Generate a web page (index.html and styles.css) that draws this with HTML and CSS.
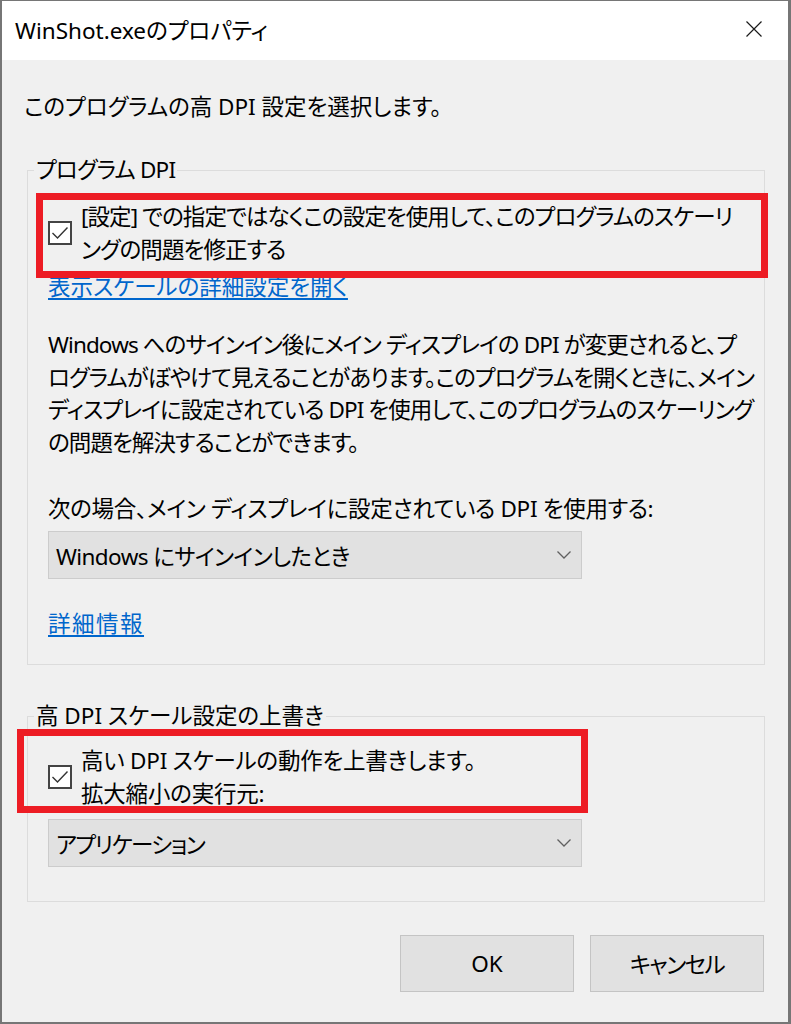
FILE: index.html
```html
<!DOCTYPE html>
<html lang="ja">
<head>
<meta charset="utf-8">
<title>WinShot.exeのプロパティ</title>
<link rel="stylesheet" href="styles.css">
</head>
<body>
<div class="window">
  <header class="titlebar">
    <span class="title">WinShot.exeのプロパティ</span>
    <svg class="close" viewBox="0 0 16 16" aria-label="閉じる">
      <path d="M0.5 0.5 L15.5 15.5 M15.5 0.5 L0.5 15.5" />
    </svg>
  </header>

  <main class="content">
    <p class="intro">このプログラムの高 DPI 設定を選択します。</p>

    <fieldset class="group group-dpi">
      <legend>プログラム DPI</legend>
      <div class="group-body">
        <label class="check">
          <span class="box">
            <svg viewBox="0 0 20 20"><path d="M2.5 10 L7.5 15 L17.5 4.5" /></svg>
          </span>
          <span class="check-text">[設定] での指定ではなくこの設定を使用して、このプログラムのスケーリ<br>ングの問題を修正する</span>
          <span class="highlight highlight-dpi"></span>
        </label>
        <a class="link link-scale" href="#">表示スケールの詳細設定を開く</a>
        <p class="desc">Windows へのサインイン後にメイン ディスプレイの DPI が変更されると、プ<br>ログラムがぼやけて見えることがあります。このプログラムを開くときに、メイン<br>ディスプレイに設定されている DPI を使用して、このプログラムのスケーリング<br>の問題を解決することができます。</p>
        <p class="prompt">次の場合、メイン ディスプレイに設定されている DPI を使用する:</p>
        <div class="select">
          <span class="select-value">Windows にサインインしたとき</span>
          <svg class="chevron" viewBox="0 0 14 8"><path d="M0.5 0.5 L7 7 L13.5 0.5" /></svg>
        </div>
        <a class="link link-more" href="#">詳細情報</a>
      </div>
    </fieldset>

    <fieldset class="group group-scale">
      <legend>高 DPI スケール設定の上書き</legend>
      <div class="group-body">
        <label class="check">
          <span class="box">
            <svg viewBox="0 0 20 20"><path d="M2.5 10 L7.5 15 L17.5 4.5" /></svg>
          </span>
          <span class="check-text">高い DPI スケールの動作を上書きします。<br>拡大縮小の実行元:</span>
          <span class="highlight highlight-scale"></span>
        </label>
        <div class="select select-scale">
          <span class="select-value select-value-kana">アプリケーション</span>
          <svg class="chevron" viewBox="0 0 14 8"><path d="M0.5 0.5 L7 7 L13.5 0.5" /></svg>
        </div>
      </div>
    </fieldset>

    <div class="actions">
      <button class="btn" type="button">OK</button>
      <button class="btn btn-cancel" type="button">キャンセル</button>
    </div>
  </main>
</div>
</body>
</html>
```

FILE: styles.css
```css
body {
  margin: 0;
  font-family: "Noto Sans", "Noto Sans CJK JP", sans-serif;
  font-size: 22.5px;
  font-feature-settings: "palt";
  color: #000;
  background: #fff;
}

/* dialog frame */
.window {
  box-sizing: border-box;
  height: 1024px;
  border-style: solid;
  border-color: #767676;
  border-width: 1px 3px 2px 2px;
  background: #f0f0f0;
  display: flex;
  flex-direction: column;
}

.titlebar {
  height: 59px;
  flex: none;
  background: #fff;
  display: flex;
  align-items: center;
  justify-content: space-between;
  padding: 0 26px 0 13px;
}

.title {
  line-height: 30px;
}

.close {
  width: 16px;
  height: 16px;
  margin-bottom: 3px;
  fill: none;
  stroke: #1a1a1a;
  stroke-width: 1.2;
}

.content {
  padding: 31px 23px 0 22px;
}

.intro {
  margin: 0;
  line-height: 32px;
}

/* group boxes */
.group {
  margin: 33px 0 0 3px;
  padding: 0;
  min-width: 0;
  border: 1px solid #dcdcdc;
}

.group legend {
  margin-left: 6px;
  padding: 0 2px;
  line-height: 28px;
}

.group-dpi legend {
  letter-spacing: -0.8px;
}

.group-body {
  padding: 16px 4px 24px 20px;
}

.group-scale {
  margin-top: 37px;
}

.group-scale .group-body {
  padding-top: 14px;
  padding-bottom: 34px;
}

/* checkbox rows */
.check {
  position: relative;
  display: flex;
  align-items: center;
  gap: 9px;
}

.box {
  flex: none;
  box-sizing: border-box;
  width: 24px;
  height: 24px;
  border: 2px solid #444;
  background: #fff;
  display: flex;
}

.box svg {
  width: 20px;
  height: 20px;
  fill: none;
  stroke: #333;
  stroke-width: 1.4;
}

.check-text {
  line-height: 33px;
  letter-spacing: -0.9px;
  white-space: nowrap;
}

.group-scale .check-text {
  letter-spacing: -0.2px;
}

/* red highlight frames drawn over the options */
.highlight {
  position: absolute;
  box-sizing: border-box;
  border: 7px solid #ed1c24;
  pointer-events: none;
}

.highlight-dpi {
  left: -12px;
  top: -7px;
  width: 732px;
  height: 85px;
}

.highlight-scale {
  left: -31px;
  top: -15px;
  width: 571px;
  height: 84px;
}

/* links and text */
.link {
  display: block;
  width: fit-content;
  color: #0066cc;
  text-decoration: underline;
  text-underline-offset: 3px;
  line-height: 32px;
}

.link-scale {
  margin-top: 5px;
}

.link-more {
  margin-top: 29px;
  letter-spacing: 1.5px;
}

.desc {
  margin: 26px 0 0;
  line-height: 32.6px;
  letter-spacing: -0.9px;
  white-space: nowrap;
}

.prompt {
  margin: 34px 0 0;
  line-height: 32px;
  letter-spacing: -0.3px;
}

/* drop-down boxes */
.select {
  box-sizing: border-box;
  width: 534px;
  height: 48px;
  margin-top: 6px;
  border: 1px solid #cccccc;
  background: #e1e1e1;
  display: flex;
  align-items: center;
  justify-content: space-between;
  padding: 0 10px 0 7px;
}

.select-value {
  letter-spacing: -0.6px;
}

.select-value-kana {
  letter-spacing: -1.5px;
}

.select-scale {
  margin-top: 9px;
}

.chevron {
  width: 14px;
  height: 8px;
  fill: none;
  stroke: #606060;
  stroke-width: 1.3;
}

/* dialog buttons */
.actions {
  display: flex;
  justify-content: flex-end;
  gap: 16px;
  margin-top: 33px;
  padding-right: 1px;
}

.btn {
  box-sizing: border-box;
  width: 174px;
  height: 57px;
  border: 1px solid #c4c4c4;
  background: #e1e1e1;
  font: inherit;
  color: #000;
  padding: 0;
}

.btn-cancel {
  letter-spacing: -1.5px;
}
```
